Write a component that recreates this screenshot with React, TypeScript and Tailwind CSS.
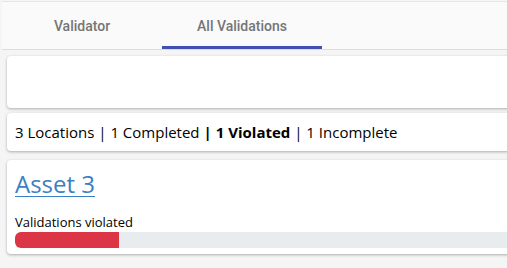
import React from 'react';

const tabs = ['Validator', 'All Validations'];

export default function App() {
    const violatedPct = 16.9;

    return (
        <div className="w-[507px] h-[268px] overflow-hidden bg-[#f5f5f5]">
            <div className="w-[640px] pl-[2px] pt-px">
                {/* Tabs */}
                <div className="flex bg-[#fafafa] border-t border-[#e6e6e6] border-b border-b-[#dcdcdc] h-[49px]">
                    {tabs.map((tab, i) => (
                        <div
                            key={tab}
                            className={`w-[160px] flex items-center justify-center pt-[5px] text-[14px] font-medium text-[#757575] border-b-[3px] ${i === 1 ? 'border-[#3f51b5]' : 'border-transparent'}`}
                            style={{ fontFamily: 'Roboto, sans-serif' }}
                        >
                            {tab}
                        </div>
                    ))}
                </div>

                <div className="pl-[5px] pt-[6px] flex flex-col gap-[5px]" style={{ fontFamily: '"Open Sans", sans-serif' }}>
                    {/* Empty filter card */}
                    <div className="h-[52px] bg-white rounded-[4px] shadow-[0_1px_3px_rgba(0,0,0,0.3)]" />

                    {/* Summary */}
                    <div className="h-[38px] bg-white rounded-[4px] shadow-[0_1px_3px_rgba(0,0,0,0.3)] flex items-center px-[8px] text-[15px] text-black">
                        3 Locations | 1 Completed <b className="font-bold ml-1">| 1 Violated</b>&nbsp;| 1 Incomplete
                    </div>

                    {/* Asset card */}
                    <div className="mt-[4px] bg-white rounded-[4px] shadow-[0_1px_3px_rgba(0,0,0,0.3)] px-[8px] pt-[7px] pb-[6px]">
                        <a href="#" className="text-[24px] leading-[34px] text-[#3a80c2] underline underline-offset-[3px] decoration-1">
                            Asset 3
                        </a>
                        <div className="mt-[13px] text-[13px] leading-[17px] text-black">Validations violated</div>
                        <div className="mt-[1px] h-[16px] bg-[#e9ecef] rounded-l-[6px] flex overflow-hidden">
                            <div className="bg-[#dc3545] h-full" style={{ width: `${violatedPct}%` }} />
                        </div>
                    </div>
                </div>
            </div>
        </div>
    );
}
